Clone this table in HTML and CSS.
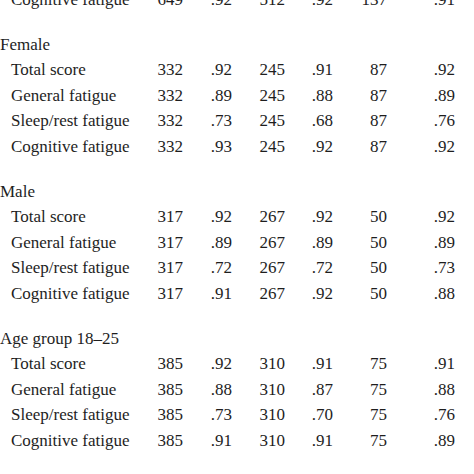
FILE: index.html
```html
<!DOCTYPE html>
<html lang="en">
<head>
<meta charset="utf-8">
<title>Fatigue scale reliability</title>
<link rel="stylesheet" href="styles.css">
</head>
<body>
<div class="table">
  <div class="group">
    <div class="row"><span class="label">Cognitive fatigue</span><span>649</span><span>.92</span><span>512</span><span>.92</span><span>137</span><span>.91</span></div>
  </div>
  <div class="group">
    <div class="head">Female</div>
    <div class="row"><span class="label">Total score</span><span>332</span><span>.92</span><span>245</span><span>.91</span><span>87</span><span>.92</span></div>
    <div class="row"><span class="label">General fatigue</span><span>332</span><span>.89</span><span>245</span><span>.88</span><span>87</span><span>.89</span></div>
    <div class="row"><span class="label">Sleep/rest fatigue</span><span>332</span><span>.73</span><span>245</span><span>.68</span><span>87</span><span>.76</span></div>
    <div class="row"><span class="label">Cognitive fatigue</span><span>332</span><span>.93</span><span>245</span><span>.92</span><span>87</span><span>.92</span></div>
  </div>
  <div class="group">
    <div class="head">Male</div>
    <div class="row"><span class="label">Total score</span><span>317</span><span>.92</span><span>267</span><span>.92</span><span>50</span><span>.92</span></div>
    <div class="row"><span class="label">General fatigue</span><span>317</span><span>.89</span><span>267</span><span>.89</span><span>50</span><span>.89</span></div>
    <div class="row"><span class="label">Sleep/rest fatigue</span><span>317</span><span>.72</span><span>267</span><span>.72</span><span>50</span><span>.73</span></div>
    <div class="row"><span class="label">Cognitive fatigue</span><span>317</span><span>.91</span><span>267</span><span>.92</span><span>50</span><span>.88</span></div>
  </div>
  <div class="group">
    <div class="head">Age group 18–25</div>
    <div class="row"><span class="label">Total score</span><span>385</span><span>.92</span><span>310</span><span>.91</span><span>75</span><span>.91</span></div>
    <div class="row"><span class="label">General fatigue</span><span>385</span><span>.88</span><span>310</span><span>.87</span><span>75</span><span>.88</span></div>
    <div class="row"><span class="label">Sleep/rest fatigue</span><span>385</span><span>.73</span><span>310</span><span>.70</span><span>75</span><span>.76</span></div>
    <div class="row"><span class="label">Cognitive fatigue</span><span>385</span><span>.91</span><span>310</span><span>.91</span><span>75</span><span>.89</span></div>
  </div>
</div>
</body>
</html>
```
FILE: styles.css
```css
html, body {
  margin: 0;
  padding: 0;
  background: #ffffff;
}
body {
  width: 474px;
  height: 474px;
  overflow: hidden;
  font-family: "Liberation Serif", "Times New Roman", serif;
  font-size: 17px;
  line-height: 25.5px;
  color: #1e1e1e;
}
.table {
  margin-top: -13.5px;
  display: flex;
  flex-direction: column;
  gap: 19.5px;
}
.group {
  display: flex;
  flex-direction: column;
}
.head {
  white-space: nowrap;
}
.row {
  display: grid;
  grid-template-columns: 140px 43px 49px 53px 48px 54px 68px;
  white-space: nowrap;
}
.row span {
  text-align: right;
}
.row .label {
  text-align: left;
  padding-left: 11px;
}
```
